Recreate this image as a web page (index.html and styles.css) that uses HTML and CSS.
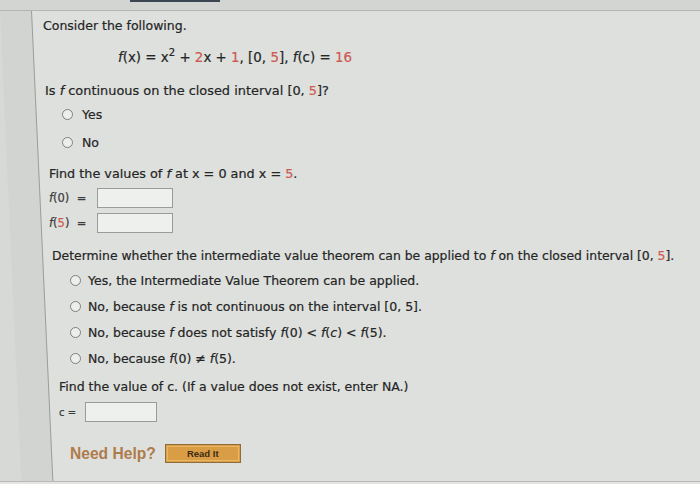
FILE: index.html
```html
<!DOCTYPE html>
<html>
<head>
<meta charset="utf-8">
<link rel="stylesheet" href="styles.css">
</head>
<body>
<div class="topbar"><div class="tab"></div></div>
<div class="main">
  <div class="gutter"></div>
  <div class="content">
    <p class="intro">Consider the following.</p>
    <p class="formula"><i>f</i>(x) = x<sup>2</sup> + <span class="r">2</span>x + <span class="r">1</span>, [0, <span class="r">5</span>], <i>f</i>(c) = <span class="r">16</span></p>

    <p class="q1">Is <i>f</i> continuous on the closed interval [0, <span class="r">5</span>]?</p>
    <div class="opts o1">
      <label class="opt"><span class="radio"></span><span class="txt">Yes</span></label>
      <label class="opt"><span class="radio"></span><span class="txt">No</span></label>
    </div>

    <p class="q2">Find the values of <i>f</i> at x = 0 and x = <span class="r">5</span>.</p>
    <div class="fields">
      <div class="field"><span class="lbl"><i>f</i>(0)&nbsp; =</span><span class="box"></span></div>
      <div class="field"><span class="lbl"><i>f</i>(<span class="r">5</span>)&nbsp; =</span><span class="box"></span></div>
    </div>

    <p class="q3">Determine whether the intermediate value theorem can be applied to <i>f</i> on the closed interval [0, <span class="r">5</span>].</p>
    <div class="opts o3">
      <label class="opt"><span class="radio"></span><span class="txt">Yes, the Intermediate Value Theorem can be applied.</span></label>
      <label class="opt"><span class="radio"></span><span class="txt">No, because <i>f</i> is not continuous on the interval [0, 5].</span></label>
      <label class="opt"><span class="radio"></span><span class="txt">No, because <i>f</i> does not satisfy <i>f</i>(0) &lt; <i>f</i>(<i>c</i>) &lt; <i>f</i>(5).</span></label>
      <label class="opt"><span class="radio"></span><span class="txt">No, because <i>f</i>(0) &ne; <i>f</i>(5).</span></label>
    </div>

    <p class="q4">Find the value of c. (If a value does not exist, enter NA.)</p>
    <div class="field cfield"><span class="lbl small">c =</span><span class="box cbox"></span></div>

    <div class="help"><span class="need">Need Help?</span><span class="readit"><span class="readin">Read It</span></span></div>
  </div>
</div>
<div class="bottom"></div>
</body>
</html>
```
FILE: styles.css
```css
html, body {
  margin: 0;
  padding: 0;
}
body {
  width: 700px;
  height: 484px;
  overflow: hidden;
  background: #d7d9d6;
  font-family: "DejaVu Sans", Verdana, sans-serif;
  font-size: 12.5px;
  line-height: 15px;
  color: #242525;
  -webkit-text-stroke: 0.2px;
}
p { margin: 0; }
.topbar {
  height: 10px;
  border-bottom: 1px solid #b3b5b2;
  background: #d3d5d2;
  display: flex;
}
.tab {
  margin-left: 130px;
  width: 90px;
  height: 2px;
  background: #3c4552;
}
.main {
  display: flex;
  height: 470px;
}
.gutter {
  width: 31px;
  flex: none;
  border-right: 1px solid #9c9e9b;
  background: #d2d4d1;
  transform: skewX(2.6deg);
  transform-origin: top left;
}
.content {
  flex: 1;
  background: #dee0dd;
  padding-top: 7px;
  padding-left: 11px;
}
.r { color: #cc5a52; }
.formula { margin: 17px 0 0 75px; font-size: 13.4px; }
.formula sup { font-size: 10px; line-height: 0; position: relative; top: -1px; }
.q1 { margin: 18px 0 0 2px; font-size: 12.9px; }
.opts { display: flex; flex-direction: column; }
.o1 { margin: 9px 0 0 19px; gap: 13px; }
.opt { display: flex; align-items: center; height: 15px; }
.radio {
  width: 9px;
  height: 9px;
  border: 1px solid #7d807d;
  border-radius: 50%;
  background: #eceeeb;
  margin-right: 9px;
  flex: none;
}
.o3 .radio { margin-right: 7px; }
.q2 { margin: 16px 0 0 6px; font-size: 12.8px; }
.fields { margin: 7px 0 0 6px; display: flex; flex-direction: column; gap: 5px; }
.field { display: flex; align-items: center; }
.lbl { width: 48px; font-size: 11.5px; color: #3a3b3b; }
.box {
  width: 74px;
  height: 18px;
  border: 1px solid #9a9c99;
  background: #eef0ed;
}
.q3 { margin: 15px 0 0 9px; font-size: 12.4px; }
.o3 { margin: 10px 0 0 27px; gap: 11px; }
.q4 { margin: 13px 0 0 16px; }
.cfield { margin: 8px 0 0 16px; }
.small { width: 26px; font-size: 10px; }
.cbox { width: 70px; }
.help {
  margin: 22px 0 0 27px;
  display: flex;
  align-items: center;
  gap: 9px;
}
.need {
  font-family: "Liberation Sans", Arial, sans-serif;
  font-weight: bold;
  font-size: 15.6px;
  color: #ae7c4b;
  -webkit-text-stroke: 0;
}
.readit {
  width: 72px;
  height: 15px;
  border: 1px solid #8e6c3c;
  padding: 1px;
  background: #d99d45;
  display: flex;
  -webkit-text-stroke: 0;
}
.readin {
  flex: 1;
  border: 1px solid #eab865;
  font-family: "Liberation Sans", Arial, sans-serif;
  font-weight: bold;
  font-size: 9.5px;
  line-height: 11px;
  color: #3b2b16;
  display: flex;
  align-items: center;
  justify-content: center;
}
.bottom {
  height: 3px;
  border-top: 1px solid #b8bab7;
  background: #e4e5e3;
}
```
